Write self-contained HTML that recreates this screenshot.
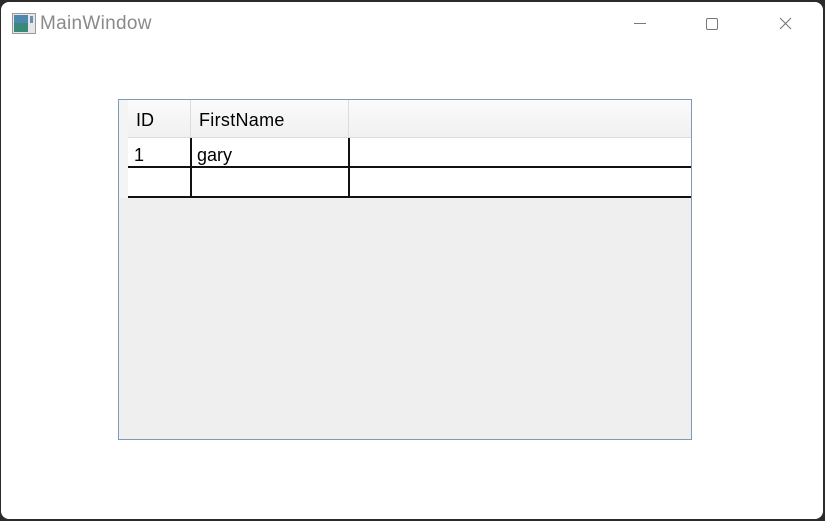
<!DOCTYPE html>
<html><head><style>
html,body{margin:0;padding:0;background:#2b2b2b;width:825px;height:521px;overflow:hidden}
.win{position:absolute;left:1px;top:2px;width:822px;height:517px;background:#fff;border-radius:8px;overflow:hidden}
.t{position:absolute;font-family:"Liberation Sans",sans-serif;}
.grid{position:absolute;left:117px;top:97px;width:572px;height:339px;border:1px solid #7e9ab9;background:#efefef}
.hdr{position:absolute;left:0;top:0;width:572px;height:37px;background:linear-gradient(#fbfbfb,#f0f0f0);border-bottom:1px solid #dcdcdc}
.cell{position:absolute;font-family:"Liberation Sans",sans-serif;font-size:18px;color:#000}
</style></head><body>
<div class="win">
  <svg style="position:absolute;left:11px;top:11px" width="24" height="21" viewBox="0 0 24 21">
    <rect x="0.5" y="0.5" width="23" height="20" fill="#e6e6e6" stroke="#999"/>
    <rect x="2" y="2" width="14" height="17" fill="#3a8a7a"/>
    <rect x="2" y="2" width="14" height="8" fill="#4f86b0"/>
    <rect x="18" y="3" width="3" height="7" fill="#6a8fb0"/>
  </svg>
  <div class="t" style="left:39px;top:11px;font-size:19px;color:#8a8a8a;letter-spacing:0.3px">MainWindow</div>
  <div style="position:absolute;left:633px;top:21px;width:12px;height:1px;background:#777"></div>
  <div style="position:absolute;left:705px;top:16px;width:10px;height:10px;border:1px solid #777;border-radius:2px"></div>
  <svg style="position:absolute;left:778px;top:15px" width="13" height="13"><path d="M1 1L12 12M12 1L1 12" stroke="#777" stroke-width="1.1"/></svg>

  <div class="grid">
    <div class="hdr"></div>
    <div style="position:absolute;left:0;top:0;width:9px;height:98px;background:#f4f4f4"></div>
    <div style="position:absolute;left:71px;top:0;width:1px;height:37px;background:#dcdcdc"></div>
    <div style="position:absolute;left:229px;top:0;width:1px;height:37px;background:#dcdcdc"></div>
    <div class="cell" style="left:17px;top:10px">ID</div>
    <div class="cell" style="left:80px;top:10px;letter-spacing:0.3px">FirstName</div>
    <div style="position:absolute;left:9px;top:38px;width:563px;height:59px;background:#fff"></div>
    <div style="position:absolute;left:71px;top:38px;width:2px;height:59px;background:#111"></div>
    <div style="position:absolute;left:229px;top:38px;width:2px;height:59px;background:#111"></div>
    <div style="position:absolute;left:9px;top:66px;width:563px;height:2px;background:#111"></div>
    <div style="position:absolute;left:9px;top:96px;width:563px;height:2px;background:#111"></div>
    <div class="cell" style="left:15px;top:45px">1</div>
    <div class="cell" style="left:78px;top:45px">gary</div>
  </div>
</div>
</body></html>
